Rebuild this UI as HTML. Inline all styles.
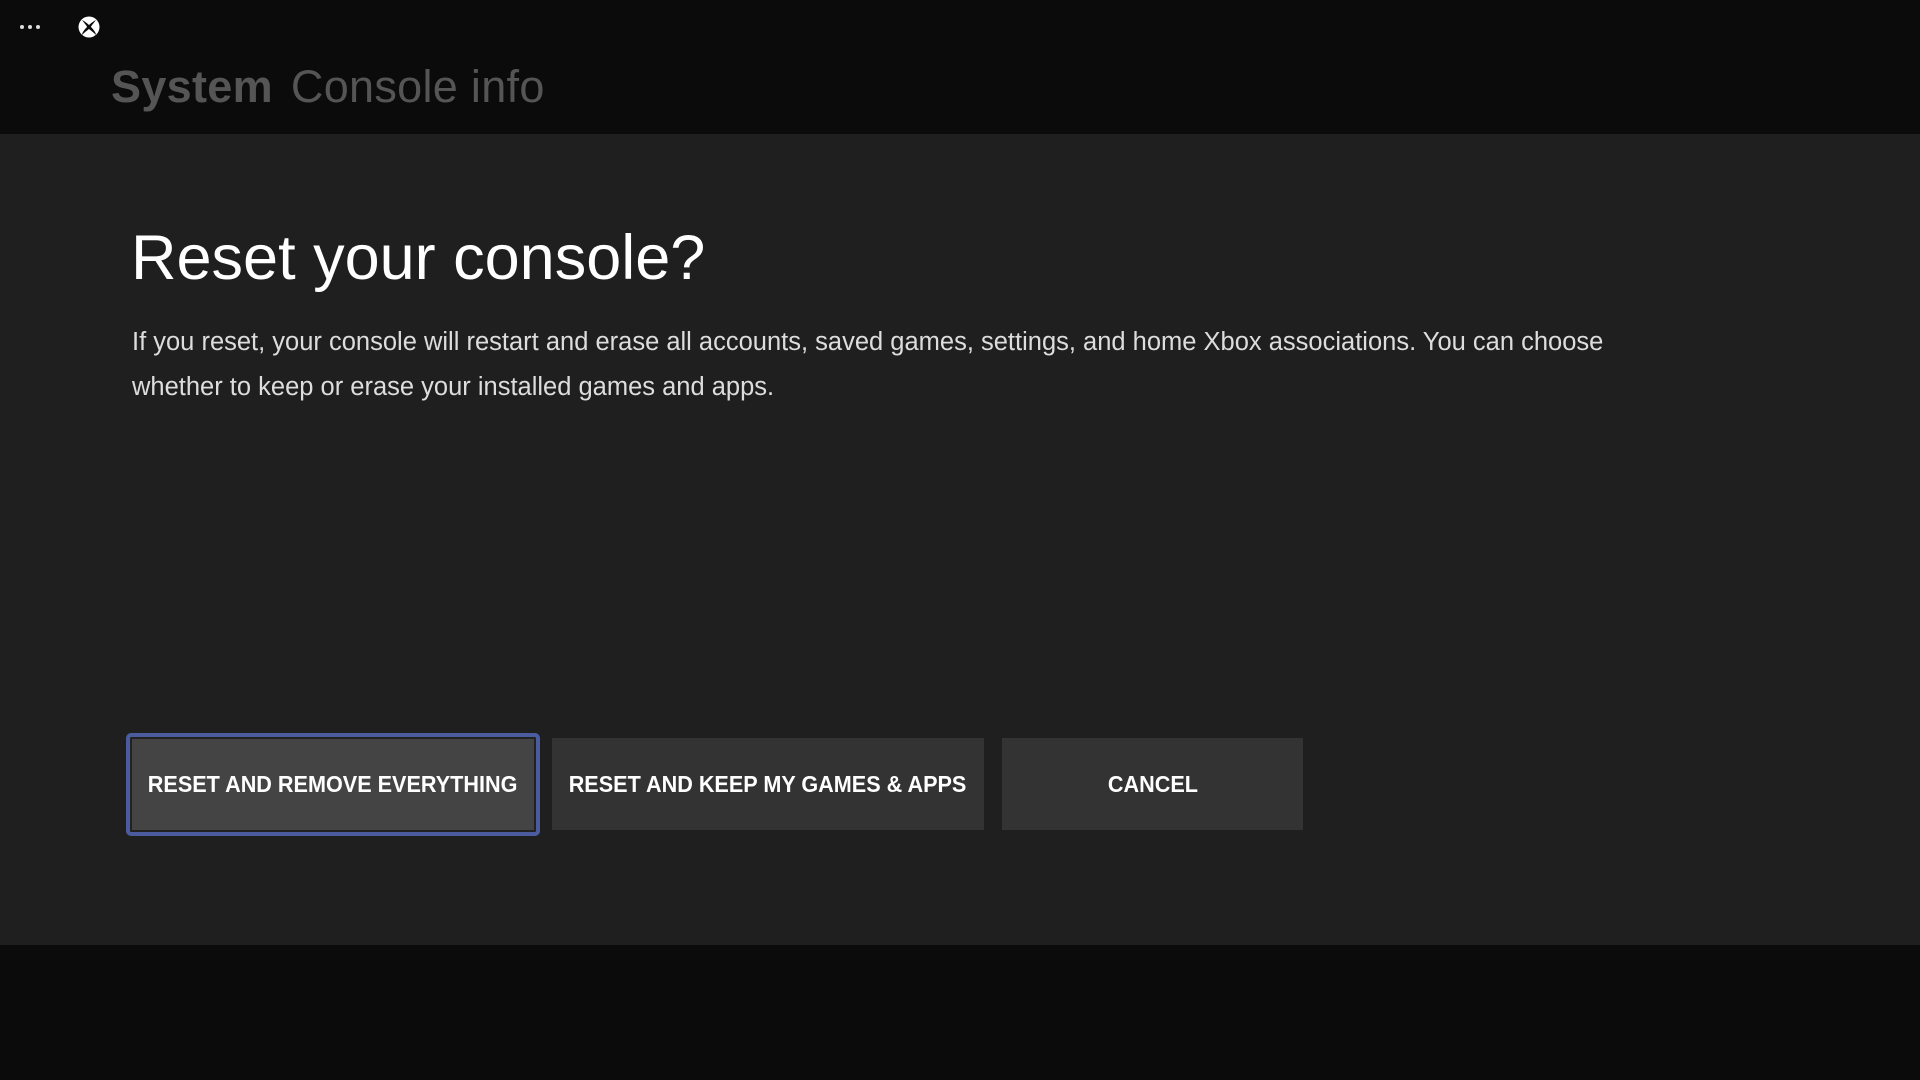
<!DOCTYPE html>
<html><head><style>
html,body{margin:0;padding:0;width:1920px;height:1080px;background:#0b0b0b;overflow:hidden;font-family:"Liberation Sans",sans-serif}
.top{position:absolute;left:0;top:0;width:1920px;height:134px;background:#0b0b0b}
.panel{position:absolute;left:0;top:134px;width:1920px;height:811px;background:#1f1f1f}
.dots{position:absolute;left:20px;top:25px;line-height:0}
.dots i{display:inline-block;width:4px;height:4px;border-radius:50%;background:#ddd;margin-right:4px}
.hdr{position:absolute;left:111px;top:61px;font-size:45px;color:#555;white-space:nowrap;letter-spacing:0.3px}
.hdr b{margin-right:18px}
h1{position:absolute;left:131px;top:218px;margin:0;font-size:63px;font-weight:normal;color:#fff;line-height:80px}
p{position:absolute;left:132px;top:320px;margin:0;width:1500px;font-size:25.5px;line-height:45px;color:#ddd}
.btn{position:absolute;display:flex;align-items:center;justify-content:center;color:#fff;font-weight:bold;font-size:23px;box-sizing:border-box;white-space:nowrap}
.btn span{display:inline-block;transform:scaleX(0.94)}
.b1{left:126px;top:733px;width:414px;height:103px;background:#444;border:4px solid #4b5c9e;border-radius:5px;box-shadow:inset 0 0 0 2px #222}
.b2{left:552px;top:738px;width:432px;height:92px;background:#333}
.b3{left:1002px;top:738px;width:301px;height:92px;background:#333}
</style></head><body>
<div class="top"></div>
<div class="panel"></div>
<div class="dots"><i></i><i></i><i></i></div>
<svg style="position:absolute;left:78px;top:16px" width="22" height="22" viewBox="0 0 22 22">
<circle cx="11" cy="11" r="10.5" fill="#fff"/>
<path d="M4 4 C8 6 11 9 11 9 C11 9 14 6 18 4 C15 8 13 10 13 11 C16 14 18 17 18 19 C15 16 11 13 11 13 C11 13 7 16 4 19 C4 17 6 14 9 11 C9 10 7 8 4 4Z" fill="#0b0b0b"/>
</svg>
<div class="hdr"><b>System</b>Console info</div>
<h1>Reset your console?</h1>
<p>If you reset, your console will restart and erase all accounts, saved games, settings, and home Xbox associations. You can choose<br>whether to keep or erase your installed games and apps.</p>
<div class="btn b1"><span>RESET AND REMOVE EVERYTHING</span></div>
<div class="btn b2"><span>RESET AND KEEP MY GAMES &amp; APPS</span></div>
<div class="btn b3"><span>CANCEL</span></div>
</body></html>
